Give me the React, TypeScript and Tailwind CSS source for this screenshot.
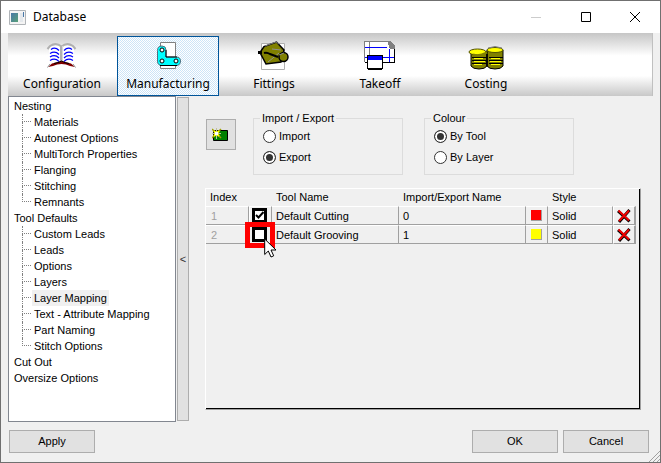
import React, { useState } from 'react';

interface TreeGroup {
  label: string;
  children: string[];
}

interface LayerRow {
  index: number;
  enabled: boolean;
  tool: string;
  name: string;
  colour: string;
  style: string;
}

const TREE: TreeGroup[] = [
  {
    label: 'Nesting',
    children: ['Materials', 'Autonest Options', 'MultiTorch Properties', 'Flanging', 'Stitching', 'Remnants'],
  },
  {
    label: 'Tool Defaults',
    children: ['Custom Leads', 'Leads', 'Options', 'Layers', 'Layer Mapping', 'Text - Attribute Mapping', 'Part Naming', 'Stitch Options'],
  },
  { label: 'Cut Out', children: [] },
  { label: 'Oversize Options', children: [] },
];

const INITIAL_ROWS: LayerRow[] = [
  { index: 1, enabled: true, tool: 'Default Cutting', name: '0', colour: 'bg-[#ff0000]', style: 'Solid' },
  { index: 2, enabled: false, tool: 'Default Grooving', name: '1', colour: 'bg-[#ffff00]', style: 'Solid' },
];

const BookIcon = () => (
  <svg width="32" height="32" viewBox="0 0 32 32" fill="none">
    <path d="M3 10Q9 4 15.500 9Q22 4 28 10V25Q22 22 15.500 24Q9 22 3 25Z" fill="#fff" />
    <path d="M1.500 11 4 8Q10 4 15.500 8.500Q21 4 27 8L29.500 11" stroke="#b0b0b0" strokeWidth="2" />
    <path d="M15 8v16" stroke="#b0b0b0" strokeWidth="2" />
    <path d="M16.500 8v16" stroke="#d8d8d8" />
    <path
      d="M5 11.500q4-3 8 1M4 15.500q5-3 9 1M4 19q5-3 9 1M4 22.500q5-3 9 1M26 11.500q-4-3-8 1M27 15.500q-5-3-9 1M27 19q-5-3-9 1M27 22.500q-5-3-9 1"
      stroke="#0000ff"
      strokeWidth="1.200"
    />
    <path d="M2 29 6 25.500Q11 24 15.500 23Q20 24 25 25.500L29 29 24 28Q20 26 15.500 26Q11 26 7 28Z" fill="#800000" />
    <path d="M8 25.500Q12 25 15.500 23Q19 25 23 25.500" stroke="#000" />
    <path d="M1.500 29.500 4 26M29.500 29.500 27 26" stroke="#909090" />
  </svg>
);

const PlateIcon = () => (
  <svg width="32" height="32" viewBox="1 0 32 32" fill="none">
    <path d="M9.500 4.500h15v26h-15z" fill="#fff" stroke="#808080" />
    <path d="M6.500 12.500Q6.500 8 11 8Q15 8 15 12V19H25Q29.500 19 29.500 23Q29.500 27.500 25 27.500H11Q6.500 27.500 6.500 23Z" fill="#00ffff" stroke="#507080" />
    <path d="M15 12v7h11M9 27.500h17" stroke="#000" />
    <circle cx="11" cy="12" r="2" fill="#fff" stroke="#000" />
    <circle cx="11" cy="23" r="2" fill="#fff" stroke="#000" />
    <circle cx="25" cy="23" r="2" fill="#fff" stroke="#000" />
  </svg>
);

const FittingIcon = () => (
  <svg width="32" height="32" viewBox="0 0 32 32" fill="none">
    <path d="M3.500 5.500h23v26h-23z" fill="#fff" stroke="#b0b0b0" />
    <path d="M2 14.500 6 8.500 18.500 4 26 12 23 24 8 26Z" fill="#808000" stroke="#000" strokeWidth="1.500" />
    <path d="m7 8 11-4 3 2" stroke="#808080" />
    <path d="m14 11 9 1M10 24l11-9" stroke="#909090" />
    <path d="M6 15q3-1 6 1l8 3" stroke="#000" strokeWidth="2" />
    <circle cx="25.500" cy="19" r="4.500" fill="#808000" stroke="#000" strokeWidth="1.500" />
    <path d="m21 17 5-2" stroke="#909090" />
    <path d="M0 13h4v3H0z" fill="#000" />
  </svg>
);

const TakeoffIcon = () => (
  <svg width="34" height="32" viewBox="0 0 34 32" fill="none" shapeRendering="crispEdges">
    <path d="M1 3h25l6 7v14H1z" fill="#fff" />
    <path d="M1.500 24V3.500h24M6.500 4v20" stroke="#808080" />
    <path d="M25 3h2l5 5v3h-5l-2-5z" fill="#808080" />
    <path d="M31.500 11v13.500H20M1.500 24.500h4" stroke="#000" />
    <path d="M2 9.500h22M2 19.500h29M26.500 11v13" stroke="#0000ff" />
    <path d="M4.500 18.500h15v12h-15z" fill="#fff" stroke="#000" />
    <path d="M5 18h14v4H5z" fill="#0000ff" />
    <path d="M4 17.500h16" stroke="#000" />
    <path d="M5 31.500h14" stroke="#000" />
  </svg>
);

const CoinsIcon = () => (
  <svg width="36" height="32" viewBox="0 0 36 32" fill="none">
    <path d="M3 14v14q2 3 8 3t8-3V13z" fill="#808000" />
    <path d="M19 12v16q2 3 8 3t8-3V12z" fill="#808000" />
    <path d="M3 15v13q2 3 8 3t8-3V14M19 12v16q2 3 8 3t8-3V12" stroke="#000" />
    <ellipse cx="9.500" cy="14" rx="8.500" ry="3" fill="#ffff00" stroke="#505000" />
    <ellipse cx="27" cy="12" rx="8" ry="2.500" fill="#ffff00" stroke="#505000" />
    <path d="M5 16.500q6 2 14-2" stroke="#808000" strokeWidth="2" />
    <path d="M20 10q7-3 14 0" stroke="#808080" />
    <path d="M4 19.500h15M4 22.500h15M4 25.500h15M21 19.500h14M21 22.500h14M21 25.500h14" stroke="#000" shapeRendering="crispEdges" />
    <path d="M6 20.500h9M6 23.500h11M6 26.500h8M23 20.500h9M22 23.500h11M23 26.500h9" stroke="#ffff00" shapeRendering="crispEdges" />
    <path d="M19 16v12" stroke="#000" strokeWidth="1.500" />
  </svg>
);

const NewLayerIcon = () => (
  <svg width="18" height="16" viewBox="0 0 18 16" fill="none">
    <path d="M1.500 3.500h14v10h-14z" fill="#008000" stroke="#000" />
    <path d="m0 2 9 9M9 2l-9 9" stroke="#a0a000" strokeWidth="1.500" />
    <path d="M4.500 1v11M0 6.500h9" stroke="#c0c0a0" />
    <path d="m2 4 5 5M7 4 2 9" stroke="#ffff00" strokeWidth="2" />
    <path d="M3 5h3v3H3z" fill="#fff" />
  </svg>
);

const DeleteIcon = () => (
  <svg width="15" height="14" viewBox="0 0 15 14" fill="none">
    <path d="m1 2 11.500 10.500M12.500 1 2 13" stroke="#000" strokeWidth="3" />
    <path d="m1.500 1.500 10.500 10M12 1.500 2 12" stroke="#f00000" strokeWidth="2" />
  </svg>
);

const CATEGORIES = [
  { label: 'Configuration', Icon: BookIcon },
  { label: 'Manufacturing', Icon: PlateIcon },
  { label: 'Fittings', Icon: FittingIcon },
  { label: 'Takeoff', Icon: TakeoffIcon },
  { label: 'Costing', Icon: CoinsIcon },
];

interface RadioGroupProps {
  legend: string;
  name: string;
  options: string[];
  value: string;
  onChange: (value: string) => void;
}

const RadioGroup: React.FC<RadioGroupProps> = ({ legend, name, options, value, onChange }) => (
  <fieldset className="w-[150px] border border-[#dcdcdc] pl-[9px] pb-[9px]">
    <legend className="-ml-[3px] px-0.5 leading-3">{legend}</legend>
    <div className="flex flex-col gap-[5px] pt-1">
      {options.map(option => (
        <label key={option} className="flex items-center gap-[3px] h-4">
          <input
            type="radio"
            name={name}
            checked={value === option}
            onChange={() => onChange(option)}
            className="appearance-none w-[13px] h-[13px] rounded-full border border-[#333333] bg-white checked:bg-[#333333] checked:shadow-[inset_0_0_0_2px_#ffffff]"
          />
          {option}
        </label>
      ))}
    </div>
  </fieldset>
);

const App: React.FC = () => {
  const [category, setCategory] = useState('Manufacturing');
  const [page, setPage] = useState('Layer Mapping');
  const [treeOpen, setTreeOpen] = useState(true);
  const [direction, setDirection] = useState('Export');
  const [colourBy, setColourBy] = useState('By Tool');
  const [rows, setRows] = useState<LayerRow[]>(INITIAL_ROWS);

  const toggleRow = (index: number) => {
    setRows(prev => prev.map(row => (row.index === index ? { ...row, enabled: !row.enabled } : row)));
  };

  const removeRow = (index: number) => {
    setRows(prev => prev.filter(row => row.index !== index));
  };

  const dialogButton = 'w-[86px] h-[23px] bg-[#e1e1e1] border border-[#adadad]';
  const cell = 'border-t border-t-white border-b border-b-[#a0a0a0] border-r border-r-[#a0a0a0] p-0';

  return (
    <div className="relative flex flex-col min-h-screen bg-[#f0f0f0] border border-[#707070] font-['Liberation_Sans',sans-serif] text-[11px] text-black">
      {/* Title bar */}
      <header className="flex items-center h-8 shrink-0 bg-white pl-2 font-['Noto_Sans',sans-serif]">
        <svg width="17" height="15" viewBox="0 0 17 15">
          <defs>
            <linearGradient id="appIcon" x1="0" y1="0" x2="1" y2="1">
              <stop offset="0" stopColor="#4878a8" />
              <stop offset="1" stopColor="#58a078" />
            </linearGradient>
          </defs>
          <path d="M.5.500h16v14H.5z" fill="#f4f4f4" stroke="#b0b4b8" />
          <path d="M2 3h7v9H2z" fill="url(#appIcon)" />
          <path d="M11 3h3v9h-3z" fill="#e4e8ec" />
          <path d="M14 2h1v5h-1z" fill="#4878a8" />
        </svg>
        <h1 className="flex-1 ml-[7px] text-[12px]">Database</h1>
        <button aria-label="Minimize" disabled className="w-[50px] h-8 flex items-center justify-center">
          <svg width="10" height="10"><path d="M0 5.500h10" stroke="#cccccc" /></svg>
        </button>
        <button aria-label="Maximize" className="w-[49px] h-8 flex items-center justify-center">
          <svg width="10" height="10"><path d="M.5.500h9v9h-9z" fill="none" stroke="#000" /></svg>
        </button>
        <button aria-label="Close" className="w-[50px] h-8 flex items-center justify-center">
          <svg width="10" height="10"><path d="m0 0 10 10M10 0 0 10" stroke="#000" /></svg>
        </button>
      </header>

      <div className="flex-1 flex flex-col px-[7px] pb-[9px]">
        {/* Categories */}
        <nav className="flex items-end h-[63px] border-r border-[#c0c0c0] bg-[linear-gradient(#c6c6c6,#ffffff_36%,#ffffff_68%,#c8c8c8)] pl-[3px] font-['Noto_Sans',sans-serif] text-[12px]">
          {CATEGORIES.map(({ label, Icon }) => (
            <button
              key={label}
              onClick={() => setCategory(label)}
              className={`flex flex-col items-center w-[102px] mr-1 h-[60px] border leading-4 ${
                category === label
                  ? 'border-[#005499] bg-[repeating-conic-gradient(#cce4f7_0_25%,#ffffff_0_50%)] bg-[length:2px_2px]'
                  : 'border-transparent'
              }`}
            >
              <span className="flex h-8 mt-px"><Icon /></span>
              <span className="mt-1.5">{label}</span>
            </button>
          ))}
        </nav>

        <div className="flex-1 flex">
          {/* Page tree */}
          {treeOpen && (
            <ul className="w-[168px] shrink-0 bg-white border border-[#828790] pl-[5px] pt-px mr-px">
              {TREE.map(group => (
                <li key={group.label}>
                  <button onClick={() => setPage(group.label)} className="block h-4 leading-4 whitespace-nowrap">{group.label}</button>
                  <ul className="ml-2">
                    {group.children.map((child, i) => (
                      <li key={child} className="flex h-4">
                        <span className="w-[9px] h-4">
                          <span className="block h-2 border-l border-b border-dotted border-[#808080]" />
                          {i < group.children.length - 1 && <span className="block h-2 border-l border-dotted border-[#808080]" />}
                        </span>
                        <button
                          onClick={() => setPage(child)}
                          className={`ml-px px-0.5 h-4 leading-4 whitespace-nowrap ${page === child ? 'bg-[#f0f0f0]' : ''}`}
                        >
                          {child}
                        </button>
                      </li>
                    ))}
                  </ul>
                </li>
              ))}
            </ul>
          )}
          <button
            onClick={() => setTreeOpen(!treeOpen)}
            className="w-3 shrink-0 my-px bg-[#e1e1e1] border border-[#adadad] text-[#333333]"
          >
            {treeOpen ? '<' : '>'}
          </button>

          {/* Layer mapping */}
          <main className="flex-1 flex flex-col pl-4 pr-3 pb-3 pt-4">
            <div className="flex items-start pl-px">
              <button aria-label="New layer" className="mt-[7px] w-[30px] h-[31px] bg-[#e1e1e1] border border-[#adadad] flex items-center justify-center">
                <NewLayerIcon />
              </button>
              <div className="ml-[17px] flex gap-[21px]">
                <RadioGroup legend="Import / Export" name="direction" options={['Import', 'Export']} value={direction} onChange={setDirection} />
                <RadioGroup legend="Colour" name="colour" options={['By Tool', 'By Layer']} value={colourBy} onChange={setColourBy} />
              </div>
            </div>

            <div className="flex-1 mt-[13px] border-t border-l border-t-white border-l-white border-r border-b border-r-[#a0a0a0] border-b-[#a0a0a0]">
              <div className="h-full border-r border-b border-black pr-[3px]">
                <table className="w-full table-fixed border-separate border-spacing-0">
                  <colgroup>
                    <col className="w-[43px]" />
                    <col className="w-[23px]" />
                    <col />
                    <col />
                    <col className="w-[22px]" />
                    <col className="w-[65px]" />
                    <col className="w-[23px]" />
                  </colgroup>
                  <thead>
                    <tr className="h-[17px] text-left">
                      <th className="font-normal p-0 pl-1">Index</th>
                      <th className="p-0" />
                      <th className="font-normal p-0 pl-1">Tool Name</th>
                      <th className="font-normal p-0 pl-1">Import/Export Name</th>
                      <th className="p-0" />
                      <th className="font-normal p-0 pl-1">Style</th>
                      <th className="p-0" />
                    </tr>
                  </thead>
                  <tbody>
                    {rows.map(row => (
                      <tr key={row.index} className="h-[19px] leading-4">
                        <td className={`${cell} pl-[5px] text-[#a0a0a0]`}>{row.index}</td>
                        <td className={`${cell} relative border-l border-l-white`}>
                          <input
                            type="checkbox"
                            aria-label={`Export ${row.tool}`}
                            checked={row.enabled}
                            onChange={() => toggleRow(row.index)}
                            className="peer block ml-0.5 appearance-none w-[15px] h-[15px] border-3 border-black bg-white"
                          />
                          <svg className="absolute top-0 left-px hidden peer-checked:block pointer-events-none" width="17" height="16" fill="none">
                            <path d="m5 8 2.500 2.500L12.500 5" stroke="#000" strokeWidth="2" />
                          </svg>
                          {row.index === 2 && (
                            <>
                              <span className="absolute -left-[5px] -top-1 w-[30px] h-[26px] border-5 border-[#ff0000] pointer-events-none" />
                              <svg className="absolute left-3.5 top-3 z-10 pointer-events-none" width="14" height="20" viewBox="0 0 14 20">
                                <path d="M.7 1v15.500l3.600-3.500 2.700 6 2.700-1.200-2.700-5.800h5Z" fill="#fff" stroke="#000" />
                              </svg>
                            </>
                          )}
                        </td>
                        <td className={`${cell} pl-1`}>{row.tool}</td>
                        <td className={`${cell} pl-1`}>{row.name}</td>
                        <td className={cell}>
                          <button aria-label="Layer colour" className={`block mx-auto w-[11px] h-[11px] border-r border-b border-[#a0a0a0] ${row.colour}`} />
                        </td>
                        <td className={`${cell} pl-1`}>{row.style}</td>
                        <td className={`${cell} border-l border-l-white border-r-2`}>
                          <button aria-label={`Delete ${row.tool}`} onClick={() => removeRow(row.index)} className="block mx-auto">
                            <DeleteIcon />
                          </button>
                        </td>
                      </tr>
                    ))}
                  </tbody>
                </table>
              </div>
            </div>
          </main>
        </div>

        {/* Dialog buttons */}
        <footer className="flex items-center pt-2 pl-px pr-1 gap-[5px]">
          <button className={`${dialogButton} mr-auto`}>Apply</button>
          <button className={dialogButton}>OK</button>
          <button className={dialogButton}>Cancel</button>
        </footer>
      </div>

      <svg className="absolute right-0 bottom-0" width="11" height="11" stroke="#a0a0a0">
        <path d="M0 11 11 0M4 11l7-7M8 11l3-3" />
      </svg>
    </div>
  );
};

export default App;
